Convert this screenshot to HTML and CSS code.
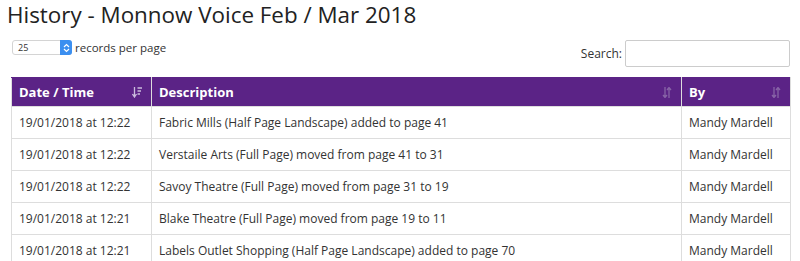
FILE: index.html
```html
<!DOCTYPE html>
<html lang="en">
<head>
    <meta charset="UTF-8">
    <title>History - Monnow Voice Feb / Mar 2018</title>
    <link rel="stylesheet" href="styles.css">
</head>
<body>
    <div class="page">
        <h1>History - Monnow Voice Feb / Mar 2018</h1>
        <div class="toolbar">
            <div class="length">
                <div class="select">
                    <span>25</span>
                    <span class="select-arrows">
                        <svg width="7" height="10" viewBox="0 0 7 10"><path d="M1 4 L3.5 1.5 L6 4 M1 6 L3.5 8.5 L6 6" fill="none" stroke="#fff" stroke-width="1.2"/></svg>
                    </span>
                </div>
                <span>records per page</span>
            </div>
            <label class="search">Search: <input type="text"></label>
        </div>
        <table class="history">
            <thead>
                <tr>
                    <th class="col-date sorted">Date / Time
                        <svg class="sort" width="10" height="11" viewBox="0 0 10 11"><path d="M2.5 0 V9 M0.5 7 L2.5 10 L4.5 7" fill="none" stroke="currentColor" stroke-width="1.3"/><path d="M5.5 1 H10 M5.5 4 H9 M5.5 7 H8" stroke="currentColor" stroke-width="1.3"/></svg>
                    </th>
                    <th class="col-desc">Description
                        <svg class="sort" width="10" height="11" viewBox="0 0 10 11"><path d="M3 0 V10 M1 8 L3 10.5 L5 8 M7 11 V1 M5 3 L7 0.5 L9 3" fill="none" stroke="currentColor" stroke-width="1.3"/></svg>
                    </th>
                    <th class="col-by">By
                        <svg class="sort" width="10" height="11" viewBox="0 0 10 11"><path d="M3 0 V10 M1 8 L3 10.5 L5 8 M7 11 V1 M5 3 L7 0.5 L9 3" fill="none" stroke="currentColor" stroke-width="1.3"/></svg>
                    </th>
                </tr>
            </thead>
            <tbody>
                <tr>
                    <td>19/01/2018 at 12:22</td>
                    <td>Fabric Mills (Half Page Landscape) added to page 41</td>
                    <td>Mandy Mardell</td>
                </tr>
                <tr>
                    <td>19/01/2018 at 12:22</td>
                    <td>Verstaile Arts (Full Page) moved from page 41 to 31</td>
                    <td>Mandy Mardell</td>
                </tr>
                <tr>
                    <td>19/01/2018 at 12:22</td>
                    <td>Savoy Theatre (Full Page) moved from page 31 to 19</td>
                    <td>Mandy Mardell</td>
                </tr>
                <tr>
                    <td>19/01/2018 at 12:21</td>
                    <td>Blake Theatre (Full Page) moved from page 19 to 11</td>
                    <td>Mandy Mardell</td>
                </tr>
                <tr>
                    <td>19/01/2018 at 12:21</td>
                    <td>Labels Outlet Shopping (Half Page Landscape) added to page 70</td>
                    <td>Mandy Mardell</td>
                </tr>
            </tbody>
        </table>
    </div>
</body>
</html>
```

FILE: styles.css
```css
body {
    margin: 0;
    font-family: "Open Sans", "Liberation Sans", sans-serif;
    color: #333;
    background: #fff;
    overflow: hidden;
}

.page {
    padding: 0 10px 0 11px;
}

h1 {
    margin: 0 0 0 -4px;
    font-size: 22.4px;
    font-weight: 400;
    line-height: 30px;
    color: #222;
}

.toolbar {
    display: flex;
    justify-content: space-between;
    align-items: flex-start;
    margin: 10px 0 10px;
}

.length {
    display: flex;
    align-items: center;
    gap: 3px;
    font-size: 11.5px;
    line-height: 14px;
    margin-left: 1px;
}

.select {
    display: flex;
    align-items: center;
    justify-content: space-between;
    width: 60px;
    height: 15px;
    box-sizing: border-box;
    border: 1px solid #d4d4d4;
    border-radius: 3px;
    padding-left: 5px;
    font-size: 9px;
    background: #fff;
}

.select-arrows {
    display: flex;
    align-items: center;
    justify-content: center;
    width: 12px;
    height: 15px;
    margin-right: -1px;
    background: #3b8ff0;
    border-radius: 0 3px 3px 0;
}

.search {
    display: flex;
    align-items: center;
    gap: 3px;
    font-size: 12px;
}

.search input {
    width: 165px;
    height: 27px;
    box-sizing: border-box;
    border: 1px solid #ccc;
    border-radius: 2px;
    margin: 0;
}

.history {
    width: 780px;
    border-collapse: collapse;
    font-size: 12px;
}

.history th {
    position: relative;
    background: #5b2386;
    color: #fff;
    font-size: 13px;
    font-weight: 700;
    text-align: left;
    height: 28px;
    padding: 0 7px;
    border: 1px solid #ddd;
    border-top-color: #5b2386;
}

.history th .sort {
    position: absolute;
    right: 9px;
    top: 9px;
    color: #8763a6;
}

.history th.sorted .sort {
    color: #cbbcdd;
}

.history td {
    height: 31px;
    padding: 0 7px;
    border: 1px solid #ddd;
}

.col-date {
    width: 125px;
}

.col-by {
    width: 94px;
}
```
